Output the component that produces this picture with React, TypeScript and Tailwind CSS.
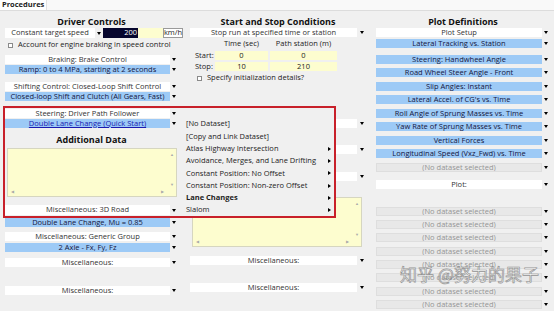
import React from "react";

type Kind = "white" | "blue" | "grey" | "link";

const BOX: Record<Kind, string> = {
  white: "bg-white text-[#333]",
  blue: "bg-[#9dcaf6] text-[#14163e]",
  grey: "bg-[#e8e8e8] text-[#959595] border border-[#dedede]",
  link: "bg-[#9dcaf6] text-[#1a1ab0] underline",
};

function Arrow() {
  return (
    <span className="block w-0 h-0 border-l-[2.5px] border-r-[2.5px] border-t-[3px] border-l-transparent border-r-transparent border-t-black" />
  );
}

function Drop({
  label,
  kind = "white",
  className = "",
  arrow = "w-[8px]",
}: {
  label: string;
  kind?: Kind;
  className?: string;
  arrow?: string;
}) {
  return (
    <div className={`flex items-center h-[9px] ${className}`}>
      <div
        className={`${BOX[kind]} flex-1 h-full flex items-center justify-center text-[7.5px] leading-none whitespace-nowrap overflow-hidden`}
      >
        {label}
      </div>
      <div className={`${arrow} flex justify-center`}>
        <Arrow />
      </div>
    </div>
  );
}

function Check({ label, className = "" }: { label: string; className?: string }) {
  return (
    <div className={`flex items-center h-[8px] text-[7.5px] leading-none text-[#222] ${className}`}>
      <span className="w-[5px] h-[5px] border border-[#8a8a8a] bg-white mr-[5px]" />
      {label}
    </div>
  );
}

function Memo({ className = "" }: { className?: string }) {
  // yellow text area with its two scroll bars
  return (
    <div className={`relative bg-[#fdfdcf] border border-[#d6d6c0] ${className}`}>
      <span className="absolute right-[2px] top-[4px] text-[4px] leading-none text-[#aaa]">▲</span>
      <span className="absolute right-[2px] bottom-[9px] text-[4px] leading-none text-[#aaa]">▼</span>
      <span className="absolute left-[3px] bottom-[2px] text-[4px] leading-none text-[#aaa]">◀</span>
      <span className="absolute right-[12px] bottom-[2px] text-[4px] leading-none text-[#aaa]">▶</span>
    </div>
  );
}

function Head({ children }: { children: React.ReactNode }) {
  return (
    <div className="h-[10px] flex items-center justify-center text-[9px] font-bold leading-none text-[#111]">
      {children}
    </div>
  );
}

const MENU: { label: string; sub?: boolean; bold?: boolean }[] = [
  { label: "[No Dataset]" },
  { label: "[Copy and Link Dataset]" },
  { label: "Atlas Highway Intersection", sub: true },
  { label: "Avoidance, Merges, and Lane Drifting", sub: true },
  { label: "Constant Position: No Offset", sub: true },
  { label: "Constant Position: Non-zero Offset", sub: true },
  { label: "Lane Changes", sub: true, bold: true },
  { label: "Slalom", sub: true },
];

export default function App() {
  return (
    <div className="relative w-[554px] h-[311px] overflow-hidden bg-[#f0f0f0] font-['Open_Sans','Noto_Sans',sans-serif]">
      <div className="h-[11px] bg-[#f9f9f9] border-b border-[#dcdcdc] flex">
        <div className="px-[2px] bg-white border-r border-[#e2e2e2] flex items-center text-[7.5px] font-bold text-[#222] leading-none">
          Procedures
        </div>
      </div>

      <div className="flex pl-[5px] pt-[5px]">
        {/* Driver Controls */}
        <div className="w-[173px] shrink-0 flex flex-col">
          <Head>Driver Controls</Head>
          <div className="mt-[2px] h-[10px] w-[178px] flex items-center">
            <div className="w-[90px] h-full bg-white flex items-center justify-center text-[7.5px] text-[#333] leading-none">
              Constant target speed
            </div>
            <div className="w-[8px] flex justify-center">
              <Arrow />
            </div>
            <div className="w-[35px] h-full bg-[#06062e] flex items-center justify-end pr-[1px] text-[7.5px] text-white leading-none">
              200
            </div>
            <div className="w-[25px] h-full bg-[#fdfdcf]" />
            <div className="w-[20px] h-full bg-white border border-[#9a9a9a] flex items-center justify-center text-[7.5px] text-[#222] leading-none">
              km/h
            </div>
          </div>
          <Check className="mt-[3px] pl-[3px]" label="Account for engine braking in speed control" />
          <Drop className="mt-[6px]" label="Braking: Brake Control" />
          <Drop className="mt-[1px]" kind="blue" label="Ramp: 0 to 4 MPa, starting at 2 seconds" />
          <Drop className="mt-[8px]" label="Shifting Control: Closed-Loop Shift Control" />
          <Drop className="mt-[1px]" kind="blue" label="Closed-loop Shift and Clutch (All Gears, Fast)" />
          <Drop className="mt-[8px]" label="Steering: Driver Path Follower" />
          <Drop className="mt-[1px]" kind="link" label="Double Lane Change (Quick Start)" />
          <div className="mt-[6px]">
            <Head>Additional Data</Head>
          </div>
          <Memo className="mt-[4px] ml-[2px] w-[170px] h-[49px]" />
          <Drop className="mt-[8px] h-[10px]" label="Miscellaneous: 3D Road" />
          <Drop className="mt-[3px]" kind="blue" label="Double Lane Change, Mu = 0.85" />
          <Drop className="mt-[5px]" label="Miscellaneous: Generic Group" />
          <Drop className="mt-[2px]" kind="blue" label="2 Axle - Fx, Fy, Fz" />
          <Drop className="mt-[6px]" label="Miscellaneous:" />
          <Drop className="mt-[19px]" label="Miscellaneous:" />
        </div>

        {/* Start and Stop Conditions */}
        <div className="ml-[12px] w-[176px] shrink-0 flex flex-col">
          <Head>Start and Stop Conditions</Head>
          <Drop className="mt-[2px]" arrow="w-[9px]" label="Stop run at specified time or station" />
          <div className="mt-[3px] h-[8px] flex items-center text-[7.5px] leading-none text-[#222]">
            <div className="w-[25px]" />
            <div className="w-[53px] text-center">Time (sec)</div>
            <div className="ml-[2px] w-[67px] text-center">Path station (m)</div>
          </div>
          <div className="mt-[3px] h-[9px] flex text-[7.5px] leading-none text-[#222]">
            <div className="w-[25px] pl-[5px] flex items-center">Start:</div>
            <div className="w-[53px] bg-[#fdfdcf] flex items-center justify-center">0</div>
            <div className="ml-[2px] w-[67px] bg-[#fdfdcf] flex items-center justify-center">0</div>
          </div>
          <div className="mt-[2px] h-[9px] flex text-[7.5px] leading-none text-[#222]">
            <div className="w-[25px] pl-[5px] flex items-center">Stop:</div>
            <div className="w-[53px] bg-[#fdfdcf] flex items-center justify-center">10</div>
            <div className="ml-[2px] w-[67px] bg-[#fdfdcf] flex items-center justify-center">210</div>
          </div>
          <Check className="mt-[3px] pl-[7px]" label="Specify initialization details?" />
          <Drop className="mt-[37px]" arrow="w-[9px]" label="" />
          <Drop className="mt-[17px]" arrow="w-[9px]" label="" />
          <Drop className="mt-[18px]" arrow="w-[9px]" label="" />
          <Memo className="mt-[16px] ml-[2px] w-[170px] h-[50px]" />
          <Drop className="mt-[9px]" arrow="w-[9px]" label="Miscellaneous:" />
          <Drop className="mt-[18px]" arrow="w-[9px]" label="Miscellaneous:" />
        </div>

        {/* Plot Definitions */}
        <div className="ml-[10px] w-[174px] shrink-0 flex flex-col">
          <Head>Plot Definitions</Head>
          <Drop className="mt-[2px]" label="Plot Setup" />
          <Drop className="mt-[2px]" kind="blue" label="Lateral Tracking vs. Station" />
          <Drop className="mt-[7px]" kind="blue" label="Steering: Handwheel Angle" />
          <Drop className="mt-[4px]" kind="blue" label="Road Wheel Steer Angle - Front" />
          <Drop className="mt-[5px]" kind="blue" label="Slip Angles: Instant" />
          <Drop className="mt-[4px]" kind="blue" label="Lateral Accel. of CG's vs. Time" />
          <Drop className="mt-[5px]" kind="blue" label="Roll Angle of Sprung Masses vs. Time" />
          <Drop className="mt-[4px]" kind="blue" label="Yaw Rate of Sprung Masses vs. Time" />
          <Drop className="mt-[5px]" kind="blue" label="Vertical Forces" />
          <Drop className="mt-[4px]" kind="blue" label="Longitudinal Speed (Vxz_Fwd) vs. Time" />
          <Drop className="mt-[5px]" kind="grey" label="(No dataset selected)" />
          <Drop className="mt-[8px]" label="Plot:" />
          <Drop className="mt-[18px]" kind="grey" label="(No dataset selected)" />
          <Drop className="mt-[4px]" kind="grey" label="(No dataset selected)" />
          <Drop className="mt-[4px]" kind="grey" label="(No dataset selected)" />
          <Drop className="mt-[5px]" kind="grey" label="(No dataset selected)" />
          <Drop className="mt-[4px]" kind="grey" label="(No dataset selected)" />
          <Drop className="mt-[4px]" kind="grey" label="(No dataset selected)" />
          <Drop className="mt-[5px]" kind="grey" label="(No dataset selected)" />
          <Drop className="mt-[4px]" kind="grey" label="(No dataset selected)" />
        </div>
      </div>

      {/* context menu open over the middle column */}
      <div className="absolute left-[181px] top-[108px] w-[153px] h-[108px] bg-[#f0f0f0] pt-[10px]">
        {MENU.map((m) => (
          <div
            key={m.label}
            className={`h-[12.3px] pl-[5px] pr-[3px] flex items-center justify-between text-[7.5px] leading-none text-[#222] whitespace-nowrap ${m.bold ? "font-bold" : ""}`}
          >
            <span>{m.label}</span>
            {m.sub && (
              <span className="block w-0 h-0 border-t-[2px] border-b-[2px] border-l-[3px] border-t-transparent border-b-transparent border-l-black" />
            )}
          </div>
        ))}
      </div>

      {/* red highlight frame */}
      <div className="absolute left-[3px] top-[106px] w-[333px] h-[112px] border-2 border-[#c8202a]" />

      {/* watermark */}
      <div className="absolute left-[400px] top-[265px] text-[17px] leading-none text-white whitespace-nowrap font-['Noto_Sans_CJK_SC',sans-serif] [-webkit-text-stroke:0.7px_#8a8a8a] opacity-90">
        知乎 @努力的果子
      </div>
    </div>
  );
}
